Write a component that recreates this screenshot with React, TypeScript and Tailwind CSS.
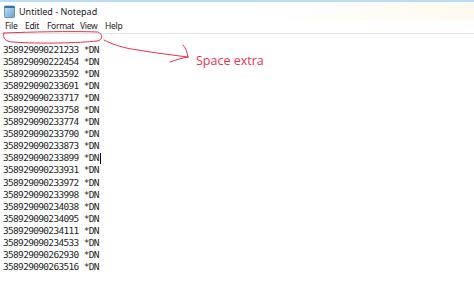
import React from "react";

const lines = [
  "358929090221233",
  "358929090222454",
  "358929090233592",
  "358929090233691",
  "358929090233717",
  "358929090233758",
  "358929090233774",
  "358929090233790",
  "358929090233873",
  "358929090233899",
  "358929090233931",
  "358929090233972",
  "358929090233998",
  "358929090234038",
  "358929090234095",
  "358929090234111",
  "358929090234533",
  "358929090262930",
  "358929090263516",
];

const menus = [
  { label: "File", w: "w-[20px]" },
  { label: "Edit", w: "w-[22px]" },
  { label: "Format", w: "w-[33px]" },
  { label: "View", w: "w-[25px]" },
  { label: "Help", w: "w-[20px]" },
];

function NotepadIcon() {
  return (
    <svg width="11" height="13" viewBox="0 0 11 13">
      <defs>
        <linearGradient id="np" x1="0" y1="0" x2="1" y2="1">
          <stop offset="0" stopColor="#cfe6f7" />
          <stop offset="1" stopColor="#5c9fd1" />
        </linearGradient>
      </defs>
      <rect x="0.5" y="1" width="10" height="11.5" rx="1" fill="url(#np)" stroke="#4b84b3" strokeWidth="0.8" />
      <rect x="0.5" y="1" width="10" height="2" fill="#3f6f9a" />
    </svg>
  );
}

export default function App() {
  return (
    <div className="relative w-[474px] h-[305px] bg-white overflow-hidden" style={{ fontFamily: "'Noto Sans', 'Liberation Sans', sans-serif" }}>
      <div className="h-[2px] bg-[#b8dcf6]" />
      {/* title bar */}
      <div className="h-[18px] flex items-center gap-[4px] pl-[4px] bg-gradient-to-r from-white via-white to-[#fffaf0]">
        <NotepadIcon />
        <span className="text-[9px] text-[#222] leading-none">Untitled - Notepad</span>
      </div>
      {/* menu bar */}
      <div
        className="h-[13px] flex items-center pl-[5px] text-[8.5px] text-[#222] leading-none tracking-[-0.3px]"
        style={{ fontFamily: "'Noto Sans', sans-serif" }}
      >
        {menus.map((m) => (
          <span key={m.label} className={`${m.w} shrink-0 whitespace-nowrap`}>
            {m.label}
          </span>
        ))}
      </div>
      <div className="h-px bg-[#e4e4e4]" />
      {/* text area */}
      <div
        className="pt-[10px] pl-[3px] text-[9.5px] leading-[12.05px] text-[#262626] tracking-[-0.68px]"
        style={{ fontFamily: "'DejaVu Sans Mono', monospace" }}
      >
        {lines.map((n, i) => (
          <div key={n} className="flex items-center whitespace-pre">
            <span>{n} *DN</span>
            {i === 9 && <span className="ml-[1px] w-px h-[11px] bg-black" />}
          </div>
        ))}
      </div>

      {/* red annotation */}
      <svg className="absolute left-0 top-0 pointer-events-none" width="474" height="305">
        <g fill="none" stroke="#e8334f" strokeWidth="1" strokeLinecap="round">
          <path d="M4 33 C 3 36, 3 41, 12 42 C 40 44, 80 43, 97 41 C 103 40, 103 34, 98 32 C 70 31, 30 32, 4 33 Z" />
          <path d="M104 40 C 112 44, 122 48, 138 50 C 155 53, 172 55, 188 57" />
          <path d="M183 45 C 186 48, 187 52, 188 57" />
          <path d="M170 62 C 176 60, 182 58, 188 57" />
        </g>
      </svg>
      <div
        className="absolute left-[196px] top-[55px] text-[12.5px] leading-none text-[#e8334f]"
        style={{ fontFamily: "'Open Sans', 'Liberation Sans', sans-serif" }}
      >
        Space extra
      </div>
    </div>
  );
}
